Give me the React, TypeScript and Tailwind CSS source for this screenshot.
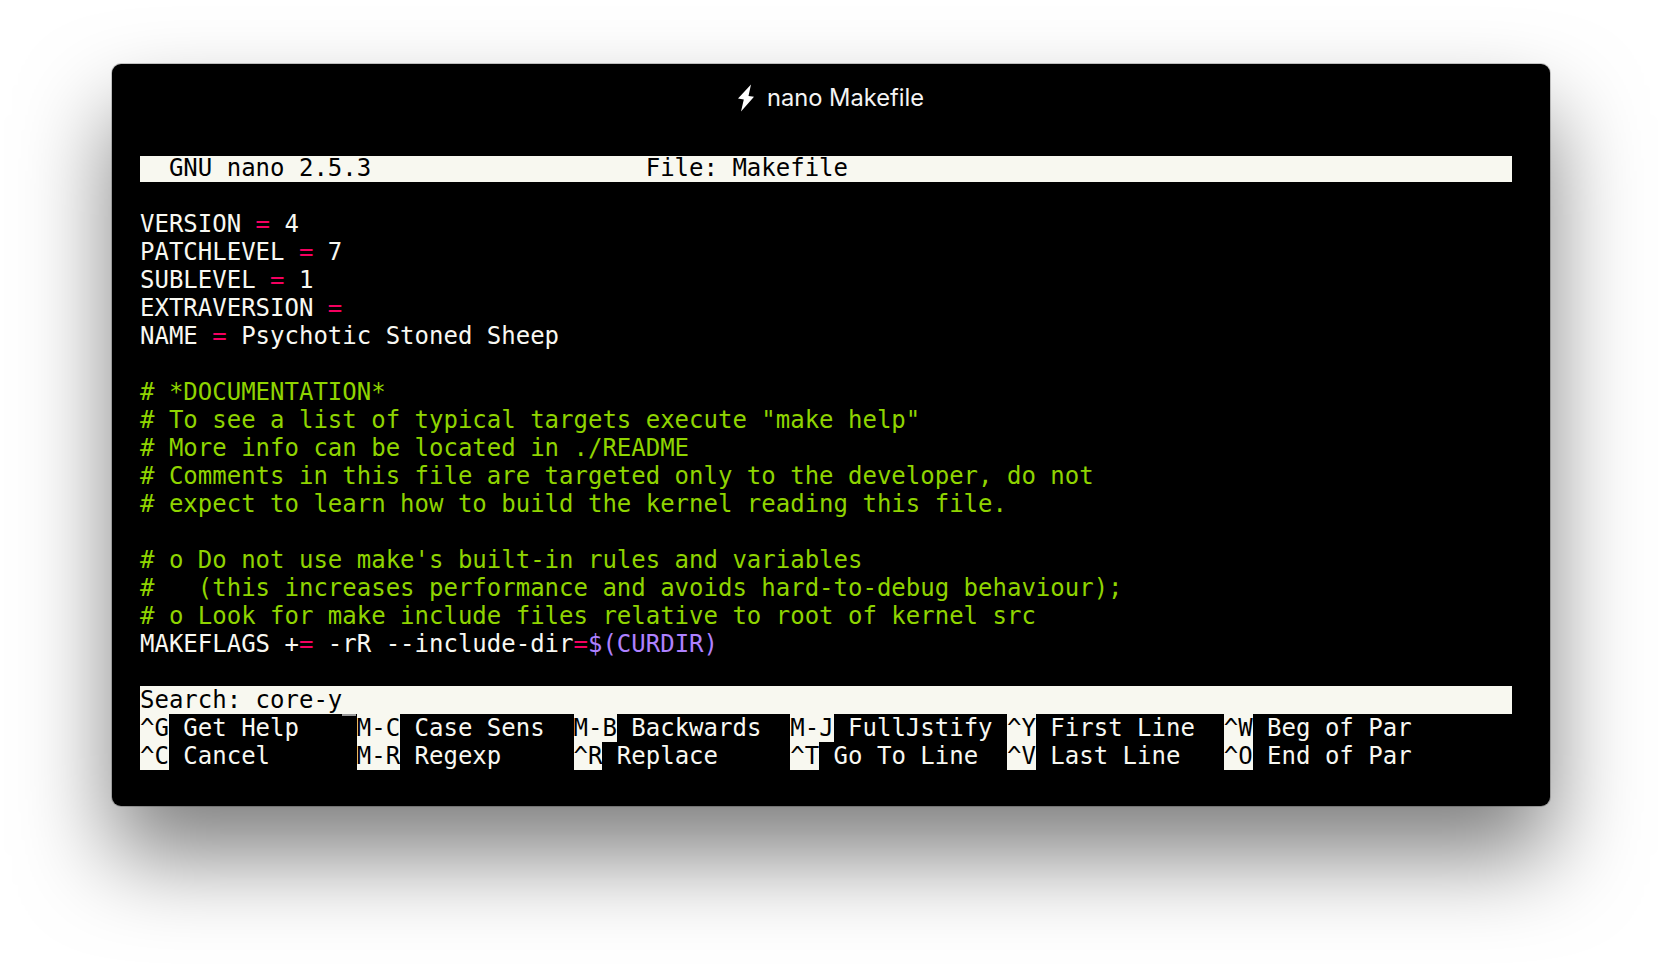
function Key({ k, label }: { k: string; label: string }) {
  return (
    <span className="flex w-[216.75px] shrink-0">
      <span className="bg-[#f8f8f0] text-black">{k}</span>
      <span className="whitespace-pre"> {label}</span>
    </span>
  );
}

function Row({ children, className = "" }: { children?: React.ReactNode; className?: string }) {
  return <div className={"flex h-[28px] whitespace-pre " + className}>{children}</div>;
}

const Eq = () => <span className="text-[#f4005f]">=</span>;

const comments1 = [
  "# *DOCUMENTATION*",
  '# To see a list of typical targets execute "make help"',
  "# More info can be located in ./README",
  "# Comments in this file are targeted only to the developer, do not",
  "# expect to learn how to build the kernel reading this file.",
];
const comments2 = [
  "# o Do not use make's built-in rules and variables",
  "#   (this increases performance and avoids hard-to-debug behaviour);",
  "# o Look for make include files relative to root of kernel src",
];

export default function App() {
  return (
    <div className="h-[966px] w-[1662px] overflow-hidden bg-white pl-[112px] pt-[64px]">
      <div className="flex h-[742px] w-[1438px] flex-col rounded-[9px] bg-black shadow-[0_50px_90px_rgba(0,0,0,0.5),0_0_0_1px_rgba(0,0,0,0.2)]">
        <div className="flex h-[92px] shrink-0 items-start justify-center pt-[20px] text-[23.7px] leading-[28px] text-[#f4f4f4] font-['Inter',sans-serif]">
          <svg width="16" height="28" viewBox="0 0 16 28" className="mr-[13px] shrink-0">
            <path d="M13 0.5 L0 14.5 L5.8 15.5 L3 27.5 L16 12.8 L10.5 12 Z" fill="#fff" />
          </svg>
          <span>nano Makefile</span>
        </div>
        <div className="mx-[28px] w-[1372px] text-[24px] leading-[28px] text-[#f8f8f2] font-['DejaVu_Sans_Mono',monospace]">
          <div className="h-[26px] whitespace-pre bg-[#f8f8f0] leading-[25px] text-black">{"  GNU nano 2.5.3                   File: Makefile"}</div>
          <Row />
          <Row>VERSION <Eq /> 4</Row>
          <Row>PATCHLEVEL <Eq /> 7</Row>
          <Row>SUBLEVEL <Eq /> 1</Row>
          <Row>EXTRAVERSION <Eq /></Row>
          <Row>NAME <Eq /> Psychotic Stoned Sheep</Row>
          <Row />
          {comments1.map((c) => (
            <Row key={c} className="text-[#8fd400]">{c}</Row>
          ))}
          <Row />
          {comments2.map((c) => (
            <Row key={c} className="text-[#8fd400]">{c}</Row>
          ))}
          <Row>MAKEFLAGS +<Eq /> -rR --include-dir<Eq /><span className="text-[#ae81ff]">$(CURDIR)</span></Row>
          <Row />
          <Row className="relative bg-[#f8f8f0] text-black">
            Search: core-y
            <span className="absolute left-[202px] top-[28px] h-[2px] w-[14px] bg-[#999]" />
          </Row>
          <Row>
            <Key k="^G" label="Get Help" />
            <Key k="M-C" label="Case Sens" />
            <Key k="M-B" label="Backwards" />
            <Key k="M-J" label="FullJstify" />
            <Key k="^Y" label="First Line" />
            <Key k="^W" label="Beg of Par" />
          </Row>
          <Row>
            <Key k="^C" label="Cancel" />
            <Key k="M-R" label="Regexp" />
            <Key k="^R" label="Replace" />
            <Key k="^T" label="Go To Line" />
            <Key k="^V" label="Last Line" />
            <Key k="^O" label="End of Par" />
          </Row>
        </div>
      </div>
    </div>
  );
}
